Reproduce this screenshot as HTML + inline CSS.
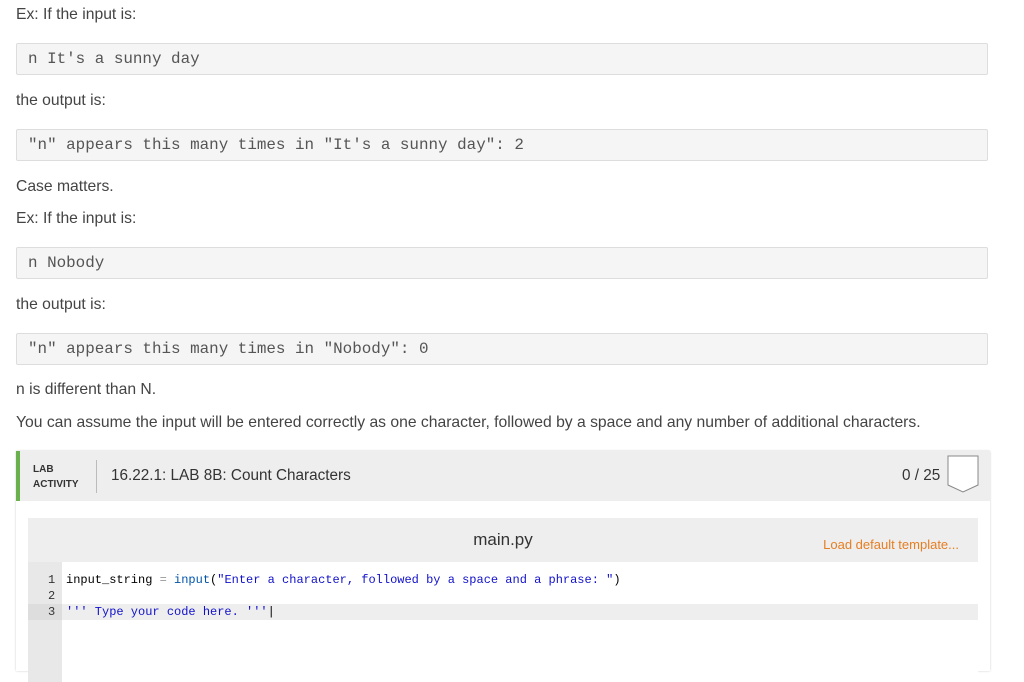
<!DOCTYPE html>
<html><head><style>
body{margin:0;background:#fff;font-family:"Liberation Sans",sans-serif;color:#333;width:1024px;height:659px;overflow:hidden;position:relative}
.t{position:absolute;left:16px;font-size:15.7px;line-height:20px;color:#444}
.pre{position:absolute;left:16px;width:970px;height:30px;background:#f5f5f5;border:1px solid #ddd;border-radius:2px;font-family:"Liberation Mono",monospace;font-size:15.9px;line-height:30px;color:#555;box-sizing:content-box}
.pre span{padding-left:11px;white-space:pre}
.card{position:absolute;left:16px;top:451px;width:974px;height:220px;background:#fff;box-shadow:0 0 2px #ccc}
.hd{position:absolute;left:0;top:0;width:974px;height:50px;background:#eee;border-left:4px solid #6ab04c;box-sizing:border-box}
.lab{position:absolute;left:13px;top:11px;font-size:10px;font-weight:bold;line-height:15px;color:#333}
.sep{position:absolute;left:76px;top:9px;width:1px;height:33px;background:#bbb}
.title{position:absolute;left:91px;top:16px;font-size:15.3px;color:#333}
.score{position:absolute;left:882px;top:16px;font-size:15.3px;color:#333}
.ed{position:absolute;left:12px;top:67px;width:950px;height:160px;background:#eee}
.fn{position:absolute;left:0;width:950px;top:12px;text-align:center;font-size:17px;color:#333}
.ld{position:absolute;right:19px;top:19px;font-size:13px;color:#e67e22}
.code{position:absolute;left:0;top:44px;width:950px;height:120px;background:#fff}
.gut{position:absolute;left:0;top:0;width:34px;height:120px;background:#e8e8e8}
.ln{position:absolute;font-family:"Liberation Mono",monospace;font-size:12px;line-height:16px;white-space:pre}
</style></head><body>
<div class="t" style="top:5px">Ex: If the input is:</div>
<div class="pre" style="top:43px"><span>n It's a sunny day</span></div>
<div class="t" style="top:91px">the output is:</div>
<div class="pre" style="top:129px"><span>"n" appears this many times in "It's a sunny day": 2</span></div>
<div class="t" style="top:177px">Case matters.</div>
<div class="t" style="top:209px">Ex: If the input is:</div>
<div class="pre" style="top:247px"><span>n Nobody</span></div>
<div class="t" style="top:295px">the output is:</div>
<div class="pre" style="top:333px"><span>"n" appears this many times in "Nobody": 0</span></div>
<div class="t" style="top:380px">n is different than N.</div>
<div class="t" style="top:413px">You can assume the input will be entered correctly as one character, followed by a space and any number of additional characters.</div>
<div class="card">
 <div class="hd">
  <div class="lab">LAB<br>ACTIVITY</div>
  <div class="sep"></div>
  <div class="title">16.22.1: LAB 8B: Count Characters</div>
  <div class="score">0 / 25</div>
  <svg style="position:absolute;left:927px;top:4px" width="34" height="38"><path d="M1 1H31V30L16 37L1 30Z" fill="#fff" stroke="#888" stroke-width="1"/></svg>
 </div>
 <div class="ed">
  <div class="fn">main.py</div>
  <div class="ld">Load default template...</div>
  <div class="code">
   <div style="position:absolute;left:0;top:42px;width:950px;height:16px;background:#eee"></div>
   <div class="gut"></div>
   <div style="position:absolute;left:0;top:42px;width:34px;height:16px;background:#ddd"></div>
   <div class="ln" style="left:20px;top:10px;color:#333">1<br>2<br>3</div>
   <div class="ln" style="left:38px;top:10px;color:#000">input_string <span style="color:#999">=</span> <span style="color:#05a">input</span>(<span style="color:#11c">"Enter a character, followed by a space and a phrase: "</span>)<br><br><span style="color:#11c">''' Type your code here. '''</span>|</div>
  </div>
 </div>
</div>
</body></html>
